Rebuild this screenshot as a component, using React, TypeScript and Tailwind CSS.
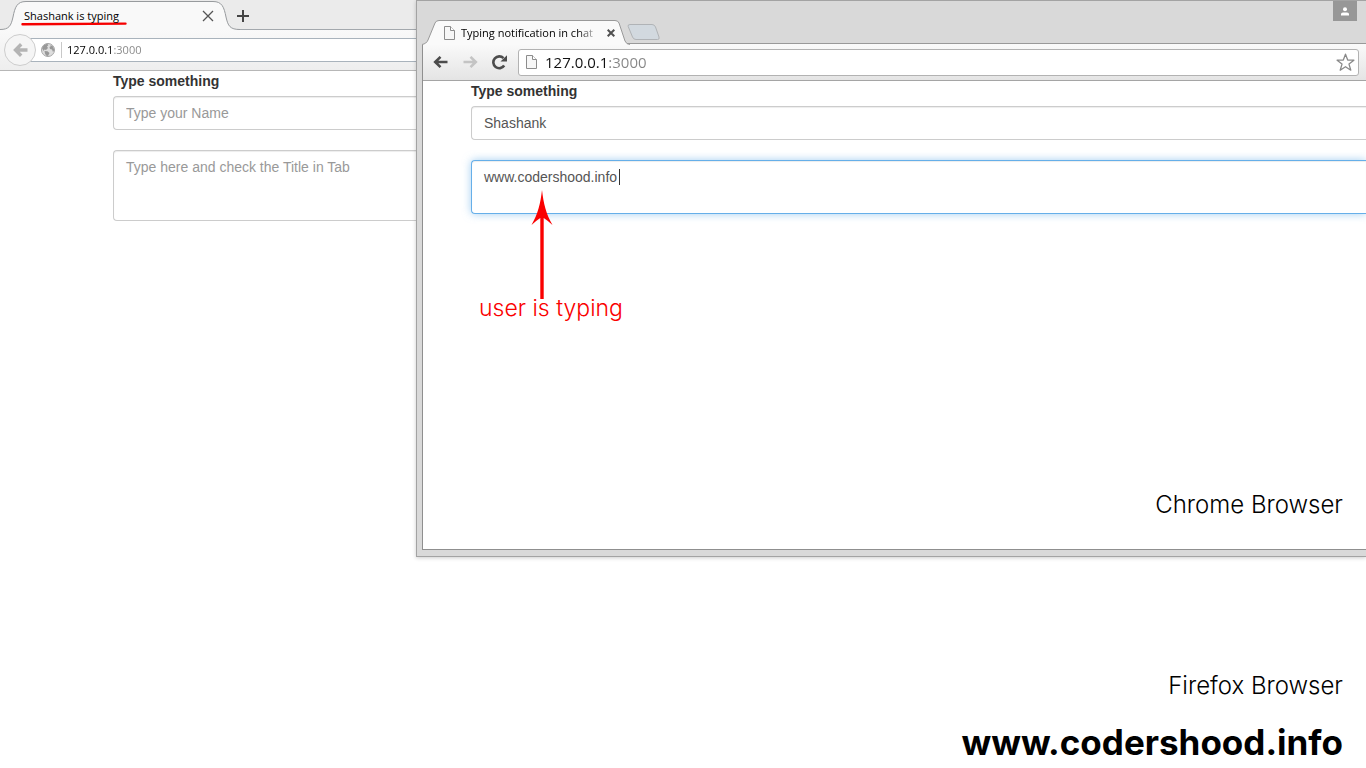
import React from 'react';

const BackArrow: React.FC<{ className?: string }> = ({ className }) => (
  <svg width="15" height="12" viewBox="0 0 15 12" fill="none" stroke="currentColor" strokeWidth="2.6" className={className}>
    <path d="M14.5 6H2.5M7.5 .9L2.2 6l5.3 5.1" />
  </svg>
);

const PageIcon: React.FC = () => (
  <svg width="11" height="14" viewBox="0 0 11 14" fill="#f7f7f7" stroke="#8c8c8c" className="shrink-0">
    <path d="M.5 .5H6.5L10.5 4.5V13.5H.5Z" />
    <path d="M6.5 .5V4.5H10.5" fill="#fff" />
  </svg>
);

const GlobeIcon: React.FC = () => (
  <svg width="14" height="14" viewBox="0 0 14 14" className="shrink-0">
    <circle cx="7" cy="7" r="6.5" fill="#dedede" stroke="#a6a6a6" />
    <path d="M1 5L3 2 6 .8 7.5 2 6 3.5 7 5 5 7 3.5 6.5 2.5 8Z" fill="#989898" />
    <path d="M8.5 1.5L12 3.5 13.2 7 12 9 11 6.5 9 6 8.5 4 10 3Z" fill="#989898" />
    <path d="M3.5 8L6.5 8.2 8.5 10 7 13 5 12.5 4 10.5Z" fill="#989898" />
  </svg>
);

const FirefoxTabs: React.FC = () => (
  <div className="flex h-[30px] bg-[#ebebeb]">
    <div className="relative flex w-[234px] items-center pl-6 pr-5 pt-0.5">
      <svg width="240" height="30" viewBox="0 0 240 30" className="absolute left-0 top-0">
        <path d="M0 29.5C9 29.5 11 26 13 17C15 7 17 1.5 26 1.5H213C222 1.5 224 7 226 17C228 26 230 29.5 240 29.5V30H0Z" fill="#f9f9f9" />
        <path d="M0 29.5C9 29.5 11 26 13 17C15 7 17 1.5 26 1.5H213C222 1.5 224 7 226 17C228 26 230 29.5 240 29.5" fill="none" stroke="#989b9e" />
      </svg>
      <svg width="106" height="4" viewBox="0 0 106 4" className="absolute left-[21px] top-[22px]">
        <path d="M1.5 2.2L104.5 1.6" stroke="#f60000" strokeWidth="2.4" strokeLinecap="round" />
      </svg>
      <span className="relative flex-1 whitespace-nowrap text-[11px] leading-4 text-black">Shashank is typing</span>
      <button type="button" aria-label="Close tab" className="relative">
        <svg width="12" height="12" viewBox="0 0 12 12" stroke="#555" strokeWidth="1.3">
          <path d="M1 1L11 11M11 1L1 11" />
        </svg>
      </button>
    </div>
    <div className="flex flex-1 items-center border-b border-[#a3a8ad] pt-[3px]">
      <button type="button" aria-label="New tab" className="relative ml-[3px]">
        <svg width="12" height="12" viewBox="0 0 12 12" stroke="#454545" strokeWidth="2">
          <path d="M6 0V12M0 6H12" />
        </svg>
      </button>
    </div>
  </div>
);

const FirefoxToolbar: React.FC = () => (
  <div className="flex h-[41px] items-center border-b border-[#b7b7b7] bg-linear-to-b from-[#f9f9f9] to-[#eeeeee] pl-1">
    <button
      type="button"
      aria-label="Back"
      className="relative flex h-8 w-8 shrink-0 items-center justify-center rounded-full border border-[#cdcdcd] bg-[#f5f5f5] text-[#b4b4b4]"
    >
      <svg width="15" height="14" viewBox="0 0 15 14" fill="none" stroke="currentColor" strokeWidth="3.4">
        <path d="M14.5 7H3M8.200 1.200L2.500 7l5.700 5.800" />
      </svg>
    </button>
    <div className="-ml-3 flex h-6 flex-1 items-center border-y border-[#a9b3bc] bg-white pl-[17px]">
      <GlobeIcon />
      <div className="ml-1.5 h-4 w-px bg-[#c8c8c8]" />
      <input
        aria-label="Firefox address"
        defaultValue="127.0.0.1:3000"
        className="ml-[5px] w-40 bg-[linear-gradient(to_right,#000_45px,#858585_45px)] bg-clip-text text-[11px] leading-4 text-transparent outline-none"
      />
    </div>
  </div>
);

const ChromeTabs: React.FC = () => (
  <div className="flex h-[43px] items-end bg-[#d9d9d9]">
    <div className="relative -mb-px flex h-[25px] w-[205px] items-center pl-[22px] pr-3">
      <svg width="208" height="25" viewBox="0 0 208 25" className="absolute left-0 top-0">
        <path d="M0 25V24.5C3 24 5 22.5 6 20L13 3Q14 .5 17 .5H193Q196 .5 197 3L203 21Q204.5 24.5 208 24.5V25Z" fill="#fafafa" />
        <path d="M0 24.5C3 24 5 22.5 6 20L13 3Q14 .5 17 .5H193Q196 .5 197 3L203 21Q204.5 24.5 208 24.5" fill="none" stroke="#999" />
      </svg>
      <span className="relative flex">
        <PageIcon />
      </span>
      <span className="relative ml-1.5 w-[138px] overflow-hidden whitespace-nowrap text-[11px] leading-4 text-black mask-r-from-85% mask-r-to-100%">
        Typing notification in chat
      </span>
      <button type="button" aria-label="Close tab" className="relative ml-2">
        <svg width="8" height="8" viewBox="0 0 8 8" stroke="#505050" strokeWidth="2">
          <path d="M.7 .7L7.3 7.3M7.3 .7L.7 7.3" />
        </svg>
      </button>
    </div>
    <div className="flex h-full flex-1 items-end justify-between border-b border-[#999]">
      <button type="button" aria-label="New tab" className="mb-0.5">
        <svg width="33" height="17" viewBox="0 0 33 17">
          <path d="M3 .5H25Q27.5 .5 28.5 3L32 13Q32.8 15.5 30.5 15.5H9Q6.5 15.5 5.5 13L1.2 2.5Q.5 .5 3 .5Z" fill="#d2d9df" stroke="#b0b3b6" />
        </svg>
      </button>
      <button
        type="button"
        aria-label="Profile"
        className="mr-[9px] flex h-5 w-6 items-center justify-center self-start bg-[#979797]"
      >
        <svg width="8" height="9" viewBox="0 0 8 9" fill="#fff">
          <circle cx="4" cy="2.2" r="2" />
          <path d="M0 8.5V7Q0 5.5 2 5.5H6Q8 5.5 8 7V8.5Z" />
        </svg>
      </button>
    </div>
  </div>
);

const ChromeToolbar: React.FC = () => (
  <div className="flex h-[37px] items-center border-b border-[#a5a5a5] bg-linear-to-b from-[#fafafa] to-[#e4e4e4] pl-2.5 pr-[7px]">
    <button type="button" aria-label="Back" className="text-[#4c4c4c]">
      <BackArrow />
    </button>
    <button type="button" aria-label="Forward" className="ml-[15px] text-[#c4c4c4]">
      <BackArrow className="rotate-180" />
    </button>
    <button type="button" aria-label="Reload" className="ml-3.5">
      <svg width="15" height="15" viewBox="0 0 15 15">
        <path d="M12.2 10.5A5.9 5.9 0 1 1 11.5 3.2" fill="none" stroke="#4c4c4c" strokeWidth="2.6" />
        <path d="M15 .3V6.5H8.5Z" fill="#4c4c4c" />
      </svg>
    </button>
    <div className="ml-[11px] flex h-[27px] flex-1 items-center rounded-[3px] border border-[#b2b2b2] bg-white pl-[7px] pr-[3px]">
      <PageIcon />
      <input
        aria-label="Chrome address"
        defaultValue="127.0.0.1:3000"
        className="ml-2 min-w-0 flex-1 bg-[linear-gradient(to_right,#111_62px,#858585_62px)] bg-clip-text text-[15px] leading-5 text-transparent outline-none"
      />
      <button type="button" aria-label="Bookmark this page">
        <svg width="19" height="19" viewBox="0 0 19 19" fill="#fff" stroke="#8a8a8a" strokeWidth="1.3" strokeLinejoin="round">
          <path d="M9.5 1.2L11.7 7 17.9 7.2 13 11.1 14.8 17.2 9.5 13.7 4.2 17.2 6 11.1 1.1 7.2 7.3 7Z" />
        </svg>
      </button>
    </div>
  </div>
);

const field =
  'block w-full resize-none rounded-l-[4px] border border-r-0 bg-white px-3 py-1.5 text-sm leading-5 text-[#555] outline-none placeholder:text-[#999]';

const ChromeWindow: React.FC = () => (
  <section className="absolute left-[416px] right-0 top-0 flex h-[557px] flex-col border-y border-l border-[#a3a3a3] bg-[#d9d9d9] pb-1.5 pl-[5px] shadow-[0_1px_4px_rgba(0,0,0,0.2)]">
    <div className="flex flex-1 flex-col border-b border-[#8f8f8f]">
      <ChromeTabs />
      <div className="flex flex-1 flex-col border-l border-[#8f8f8f] bg-white">
        <ChromeToolbar />
        <div className="relative flex flex-1 flex-col pl-12 font-['Liberation_Sans',Arial,sans-serif]">
          <label htmlFor="chrome-name" className="mb-[5px] text-sm font-bold leading-5 text-[#333]">Type something</label>
          <input
            id="chrome-name"
            defaultValue="Shashank"
            className={`${field} h-[34px] border-[#ccc] shadow-[inset_0_1px_1px_rgba(0,0,0,0.075)]`}
          />
          <div className="relative mt-5">
            <textarea
              aria-label="Message"
              defaultValue="www.codershood.info"
              className={`${field} h-[54px] border-[#66afe9] shadow-[inset_0_1px_1px_rgba(0,0,0,0.075),0_0_8px_rgba(102,175,233,0.6)]`}
            />
            <div className="absolute left-[148px] top-[9px] h-4 w-px bg-[#333]" />
            <div className="absolute left-2 top-[30px] flex flex-col text-[#fa0000]">
              <svg width="22" height="109" viewBox="0 0 22 109" fill="currentColor" className="ml-[52px]">
                <path d="M11 0C12.5 13 15 24 21.5 35Q16 30 12.700 28V109H9.300V28Q6 30 .5 35C7 24 9.500 13 11 0Z" />
              </svg>
              <p className="-mt-[5px] whitespace-nowrap font-['Inter',sans-serif] text-[23px] font-light leading-7">user is typing</p>
            </div>
          </div>
          <p className="mt-auto pb-7 pr-[23px] text-right font-['Inter',sans-serif] text-2xl font-light text-black">Chrome Browser</p>
        </div>
      </div>
    </div>
  </section>
);

const App: React.FC = () => (
  <main className="relative flex min-h-screen flex-col overflow-hidden bg-white font-['Open_Sans','Noto_Sans',sans-serif]">
    <FirefoxTabs />
    <FirefoxToolbar />
    <div className="flex flex-1 flex-col font-['Liberation_Sans',Arial,sans-serif]">
      <div className="flex flex-col pl-[113px]">
        <label htmlFor="firefox-name" className="mb-[5px] text-sm font-bold leading-5 text-[#333]">Type something</label>
        <input
          id="firefox-name"
          placeholder="Type your Name"
          className={`${field} h-[34px] border-[#ccc] shadow-[inset_0_1px_1px_rgba(0,0,0,0.075)]`}
        />
        <textarea
          aria-label="Message"
          placeholder="Type here and check the Title in Tab"
          className={`${field} mt-5 h-[71px] border-[#ccc] shadow-[inset_0_1px_1px_rgba(0,0,0,0.075)]`}
        />
      </div>
      <footer className="mt-auto pr-[23px] text-right font-['Inter',sans-serif] text-black">
        <p className="text-2xl font-light">Firefox Browser</p>
        <p className="mt-[18px] pb-1 text-[35px] font-bold leading-[44px]">www.codershood.info</p>
      </footer>
    </div>
    <ChromeWindow />
  </main>
);

export default App;
